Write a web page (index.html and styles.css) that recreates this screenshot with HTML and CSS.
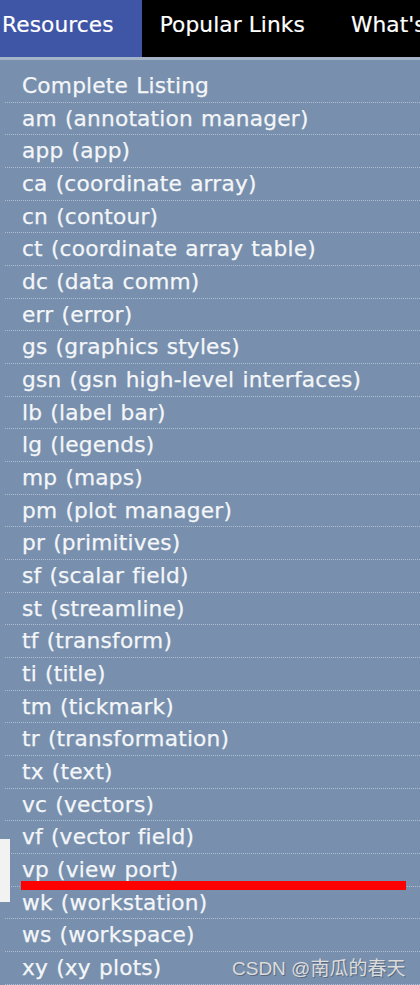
FILE: index.html
```html
<!DOCTYPE html>
<html>
<head>
<meta charset="utf-8">
<link rel="stylesheet" href="styles.css">
</head>
<body>
<div class="page">
  <nav class="topnav">
    <a class="tab active">Resources</a>
    <a class="tab">Popular Links</a>
    <a class="tab">What's New</a>
  </nav>
  <ul class="menu">
    <li><a>Complete Listing</a></li>
    <li><a>am (annotation manager)</a></li>
    <li><a>app (app)</a></li>
    <li><a>ca (coordinate array)</a></li>
    <li><a>cn (contour)</a></li>
    <li><a>ct (coordinate array table)</a></li>
    <li><a>dc (data comm)</a></li>
    <li><a>err (error)</a></li>
    <li><a>gs (graphics styles)</a></li>
    <li><a>gsn (gsn high-level interfaces)</a></li>
    <li><a>lb (label bar)</a></li>
    <li><a>lg (legends)</a></li>
    <li><a>mp (maps)</a></li>
    <li><a>pm (plot manager)</a></li>
    <li><a>pr (primitives)</a></li>
    <li><a>sf (scalar field)</a></li>
    <li><a>st (streamline)</a></li>
    <li><a>tf (transform)</a></li>
    <li><a>ti (title)</a></li>
    <li><a>tm (tickmark)</a></li>
    <li><a>tr (transformation)</a></li>
    <li><a>tx (text)</a></li>
    <li><a>vc (vectors)</a></li>
    <li><a>vf (vector field)</a></li>
    <li><a>vp (view port)</a></li>
    <li><a>wk (workstation)</a></li>
    <li><a>ws (workspace)</a></li>
    <li><a>xy (xy plots)</a></li>
  </ul>
  <div class="sidebox"></div>
  <div class="redline"></div>
  <div class="watermark">CSDN @南瓜的春天</div>
</div>
</body>
</html>
```
FILE: styles.css
```css
html, body {
  margin: 0;
  padding: 0;
  background: #7890ad;
}
.page {
  position: relative;
  width: 420px;
  height: 985px;
  overflow: hidden;
  font-family: "DejaVu Sans", Verdana, sans-serif;
  font-size: 21.7px;
}
.topnav {
  display: flex;
  height: 57px;
  background: #000;
  margin-left: -16px;
  white-space: nowrap;
  letter-spacing: 0.1px;
}
.tab {
  display: block;
  padding: 0 28px 0 18px;
  line-height: 50px;
  color: #fff;
  flex: none;
  -webkit-text-stroke: 0.2px #fff;
}
.tab.active {
  background: #3f55a5;
}
.menu {
  list-style: none;
  margin: 0;
  padding: 10px 0 0 5px;
  border-top: 3px solid #a3b3c8;
  background: #7890ad;
  letter-spacing: 0.2px;
  word-spacing: 1px;
}
.menu li {
  border-bottom: 1px dotted #aebcd0;
}
.menu a {
  display: block;
  padding-left: 17px;
  line-height: 31.67px;
  color: #f4f6f9;
  white-space: nowrap;
  -webkit-text-stroke: 0.25px #f4f6f9;
}
.sidebox {
  position: absolute;
  left: 0;
  top: 839px;
  width: 10px;
  height: 63px;
  background: #f2f2f2;
}
.redline {
  position: absolute;
  left: 21px;
  top: 881px;
  width: 385px;
  height: 9px;
  background: #ff0000;
}
.watermark {
  position: absolute;
  left: 232px;
  top: 953px;
  font-family: "Liberation Sans", "Noto Sans CJK SC", sans-serif;
  font-size: 19px;
  color: #dcdcdc;
  text-shadow: 1px 1px 0 #5a6a80;
  white-space: nowrap;
}
```
